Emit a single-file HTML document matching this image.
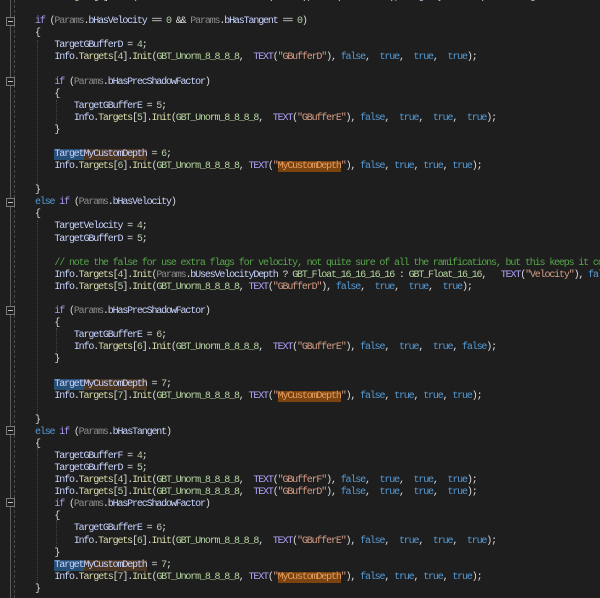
<!DOCTYPE html>
<html><head><meta charset="utf-8"><style>
html,body{margin:0;padding:0;background:#1e1e1e;width:600px;height:598px;overflow:hidden}
#code{position:absolute;left:35px;top:-8px;width:565px;height:606px;overflow:hidden;font-family:"Liberation Mono",monospace;font-size:10px;letter-spacing:-1.15px;line-height:12.08px;color:#dcdcdc;white-space:pre}
.k{color:#569cd6}.i{color:#a79bf2}.p{color:#8c8c8c}.v{color:#c8d4ff}.f{color:#dcdcaa}.e{color:#b8d7a3}
.m{color:#b4a2ff}.s{color:#d69d85}.b{color:#569cd6}.n{color:#b5cea8}.c{color:#57a64a}
.sel{background:#264f78}.hl{background:#4a3522}.sh{background:#7a4310;color:#e8a060}
.gut{position:absolute;left:10px;width:1px;background:#5a5a5a}
.dash{position:absolute;left:14px;top:0;height:598px;border-left:1px dashed #4a4a4a}
.fold{position:absolute;left:6px;width:7px;height:7px;border:1px solid #7a7a7a;background:#1e1e1e}
.fold:after{content:"";position:absolute;left:1px;top:3px;width:5px;height:1px;background:#bbb}
.g{position:absolute;border-left:1px dotted #444}
</style></head><body>
<div class="dash"></div>
<div class="gut" style="top:0;height:598px"></div>
<div class="fold" style="top:17px"></div>
<div class="fold" style="top:77px"></div>
<div class="fold" style="top:198px"></div>
<div class="fold" style="top:306px"></div>
<div class="fold" style="top:426px"></div>
<div class="fold" style="top:498px"></div>
<div class="g" style="left:37px;top:40px;height:148px"></div>
<div class="g" style="left:56px;top:100px;height:28px"></div>
<div class="g" style="left:37px;top:220px;height:196px"></div>
<div class="g" style="left:56px;top:328px;height:28px"></div>
<div class="g" style="left:37px;top:448px;height:136px"></div>
<div class="g" style="left:56px;top:520px;height:28px"></div>
<div id="code"><span class="v">Info</span>.<span class="f">Targets</span>[<span class="n">3</span>].<span class="f">Init</span>(<span class="e">GetGBufferResolveFormatForm</span>(<span class="p">Params</span>), <span class="m">TEXT</span>(<span class="s">"GBufferC"</span>), <span class="v">TargetMyCustomDepth</span> == <span class="v">TargetGBufferResolveRelative</span>

<span class="i">if</span> (<span class="p">Params</span>.<span class="v">bHasVelocity</span> == <span class="n">0</span> &amp;&amp; <span class="p">Params</span>.<span class="v">bHasTangent</span> == <span class="n">0</span>)
{
    <span class="v">TargetGBufferD</span> = <span class="n">4</span>;
    <span class="v">Info</span>.<span class="f">Targets</span>[<span class="n">4</span>].<span class="f">Init</span>(<span class="e">GBT_Unorm_8_8_8_8</span>,  <span class="m">TEXT</span>(<span class="s">"GBufferD"</span>), <span class="b">false</span>,  <span class="b">true</span>,  <span class="b">true</span>,  <span class="b">true</span>);

    <span class="i">if</span> (<span class="p">Params</span>.<span class="v">bHasPrecShadowFactor</span>)
    {
        <span class="v">TargetGBufferE</span> = <span class="n">5</span>;
        <span class="v">Info</span>.<span class="f">Targets</span>[<span class="n">5</span>].<span class="f">Init</span>(<span class="e">GBT_Unorm_8_8_8_8</span>,  <span class="m">TEXT</span>(<span class="s">"GBufferE"</span>), <span class="b">false</span>,  <span class="b">true</span>,  <span class="b">true</span>,  <span class="b">true</span>);
    }

    <span class="v"><span class="sel">Target</span><span class="hl">MyCustomDepth</span></span> = <span class="n">6</span>;
    <span class="v">Info</span>.<span class="f">Targets</span>[<span class="n">6</span>].<span class="f">Init</span>(<span class="e">GBT_Unorm_8_8_8_8</span>, <span class="m">TEXT</span>(<span class="s">"<span class="sh">MyCustomDepth</span>"</span>), <span class="b">false</span>, <span class="b">true</span>, <span class="b">true</span>, <span class="b">true</span>);

}
<span class="k">else</span> <span class="i">if</span> (<span class="p">Params</span>.<span class="v">bHasVelocity</span>)
{
    <span class="v">TargetVelocity</span> = <span class="n">4</span>;
    <span class="v">TargetGBufferD</span> = <span class="n">5</span>;

    <span class="c">// note the false for use extra flags for velocity, not quite sure of all the ramifications, but this keeps it consistent</span>
    <span class="v">Info</span>.<span class="f">Targets</span>[<span class="n">4</span>].<span class="f">Init</span>(<span class="p">Params</span>.<span class="v">bUsesVelocityDepth</span> ? <span class="e">GBT_Float_16_16_16_16</span> : <span class="e">GBT_Float_16_16</span>,   <span class="m">TEXT</span>(<span class="s">"Velocity"</span>), <span class="b">false</span>);
    <span class="v">Info</span>.<span class="f">Targets</span>[<span class="n">5</span>].<span class="f">Init</span>(<span class="e">GBT_Unorm_8_8_8_8</span>, <span class="m">TEXT</span>(<span class="s">"GBufferD"</span>), <span class="b">false</span>,  <span class="b">true</span>,  <span class="b">true</span>,  <span class="b">true</span>);

    <span class="i">if</span> (<span class="p">Params</span>.<span class="v">bHasPrecShadowFactor</span>)
    {
        <span class="v">TargetGBufferE</span> = <span class="n">6</span>;
        <span class="v">Info</span>.<span class="f">Targets</span>[<span class="n">6</span>].<span class="f">Init</span>(<span class="e">GBT_Unorm_8_8_8_8</span>,  <span class="m">TEXT</span>(<span class="s">"GBufferE"</span>), <span class="b">false</span>,  <span class="b">true</span>,  <span class="b">true</span>, <span class="b">false</span>);
    }

    <span class="v"><span class="sel">Target</span><span class="hl">MyCustomDepth</span></span> = <span class="n">7</span>;
    <span class="v">Info</span>.<span class="f">Targets</span>[<span class="n">7</span>].<span class="f">Init</span>(<span class="e">GBT_Unorm_8_8_8_8</span>, <span class="m">TEXT</span>(<span class="s">"<span class="sh">MyCustomDepth</span>"</span>), <span class="b">false</span>, <span class="b">true</span>, <span class="b">true</span>, <span class="b">true</span>);

}
<span class="k">else</span> <span class="i">if</span> (<span class="p">Params</span>.<span class="v">bHasTangent</span>)
{
    <span class="v">TargetGBufferF</span> = <span class="n">4</span>;
    <span class="v">TargetGBufferD</span> = <span class="n">5</span>;
    <span class="v">Info</span>.<span class="f">Targets</span>[<span class="n">4</span>].<span class="f">Init</span>(<span class="e">GBT_Unorm_8_8_8_8</span>,  <span class="m">TEXT</span>(<span class="s">"GBufferF"</span>), <span class="b">false</span>,  <span class="b">true</span>,  <span class="b">true</span>,  <span class="b">true</span>);
    <span class="v">Info</span>.<span class="f">Targets</span>[<span class="n">5</span>].<span class="f">Init</span>(<span class="e">GBT_Unorm_8_8_8_8</span>,  <span class="m">TEXT</span>(<span class="s">"GBufferD"</span>), <span class="b">false</span>,  <span class="b">true</span>,  <span class="b">true</span>,  <span class="b">true</span>);
    <span class="i">if</span> (<span class="p">Params</span>.<span class="v">bHasPrecShadowFactor</span>)
    {
        <span class="v">TargetGBufferE</span> = <span class="n">6</span>;
        <span class="v">Info</span>.<span class="f">Targets</span>[<span class="n">6</span>].<span class="f">Init</span>(<span class="e">GBT_Unorm_8_8_8_8</span>,  <span class="m">TEXT</span>(<span class="s">"GBufferE"</span>), <span class="b">false</span>,  <span class="b">true</span>,  <span class="b">true</span>,  <span class="b">true</span>);
    }
    <span class="v"><span class="sel">Target</span><span class="hl">MyCustomDepth</span></span> = <span class="n">7</span>;
    <span class="v">Info</span>.<span class="f">Targets</span>[<span class="n">7</span>].<span class="f">Init</span>(<span class="e">GBT_Unorm_8_8_8_8</span>, <span class="m">TEXT</span>(<span class="s">"<span class="sh">MyCustomDepth</span>"</span>), <span class="b">false</span>, <span class="b">true</span>, <span class="b">true</span>, <span class="b">true</span>);
}
 .
</div>
</body></html>
